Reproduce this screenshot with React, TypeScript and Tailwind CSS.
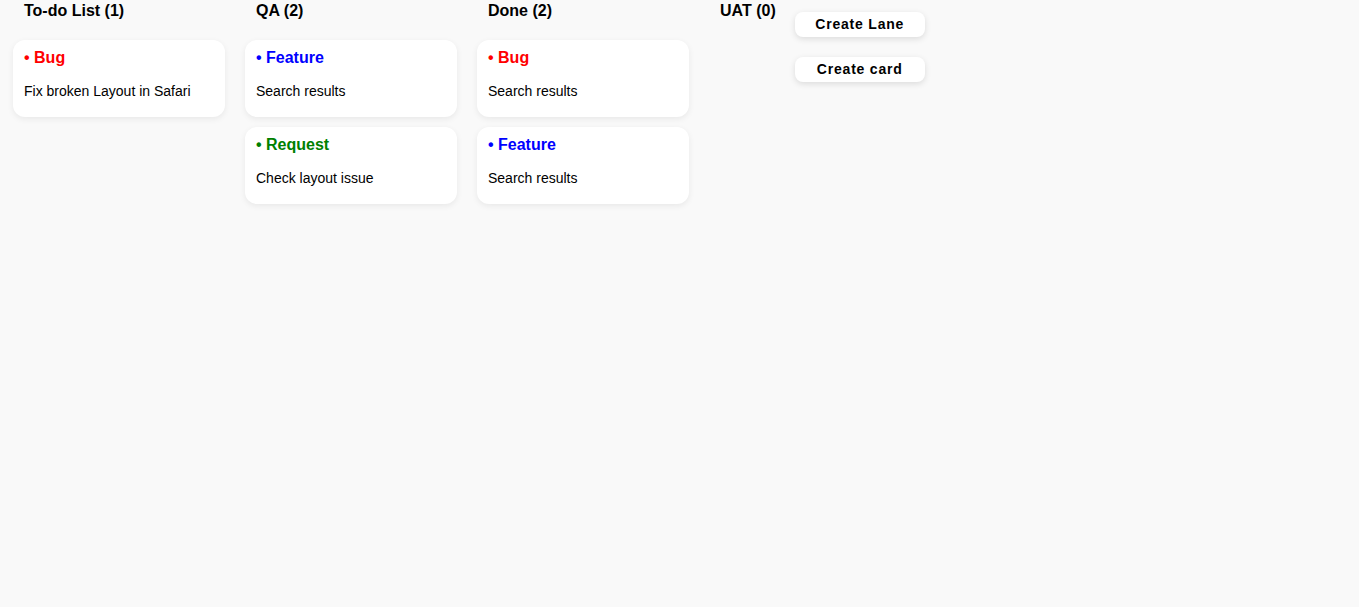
type Card = { id: number; type: 'Bug' | 'Feature' | 'Request'; text: string };
type Lane = { id: number; title: string; cards: Card[] };

const lanes: Lane[] = [
  { id: 1, title: 'To-do List', cards: [{ id: 1, type: 'Bug', text: 'Fix broken Layout in Safari' }] },
  {
    id: 2,
    title: 'QA',
    cards: [
      { id: 2, type: 'Feature', text: 'Search results' },
      { id: 3, type: 'Request', text: 'Check layout issue' },
    ],
  },
  {
    id: 3,
    title: 'Done',
    cards: [
      { id: 4, type: 'Bug', text: 'Search results' },
      { id: 5, type: 'Feature', text: 'Search results' },
    ],
  },
  { id: 4, title: 'UAT', cards: [] },
];

const typeColor = {
  Bug: 'text-[#ff0000]',
  Feature: 'text-[#0000ff]',
  Request: 'text-[#008000]',
};

export default function App() {
  return (
    <div className="min-h-screen bg-[#f9f9f9] font-['Liberation_Sans',Arial,sans-serif] text-black">
      <div className="flex items-start gap-5 pl-[13px]">
        {lanes.map((lane) => (
          <div key={lane.id} className="flex flex-col">
            <h2 className="ml-[11px] text-base leading-[22px] font-bold">
              {lane.title} ({lane.cards.length})
            </h2>
            <div className="mt-[18px] flex flex-col gap-[10px]">
              {lane.cards.map((card) => (
                <div
                  key={card.id}
                  className="w-[212px] rounded-xl bg-white px-[11px] pt-[6px] pb-4 shadow-[0_2px_6px_rgba(0,0,0,0.07)]"
                >
                  <div className={`text-base leading-6 font-bold ${typeColor[card.type]}`}>• {card.type}</div>
                  <p className="mt-[11px] text-sm leading-5">{card.text}</p>
                </div>
              ))}
            </div>
          </div>
        ))}
        <div className="-ml-px mt-3 flex flex-col gap-5">
          <button className="h-[25px] w-[130px] rounded-lg bg-white pb-px text-sm leading-none font-bold tracking-[0.8px] shadow-[0_2px_6px_rgba(0,0,0,0.12)]">
            Create Lane
          </button>
          <button className="h-[25px] w-[130px] rounded-lg bg-white pb-px text-sm leading-none font-bold tracking-[0.8px] shadow-[0_2px_6px_rgba(0,0,0,0.12)]">
            Create card
          </button>
        </div>
      </div>
    </div>
  );
}
